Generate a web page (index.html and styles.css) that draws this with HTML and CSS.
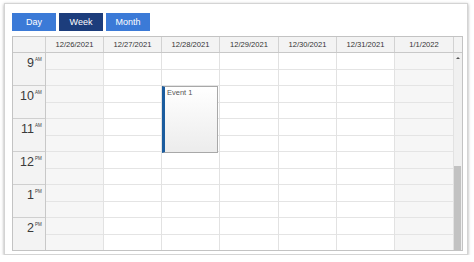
FILE: index.html
```html
<!DOCTYPE html>
<html>
<head>
<meta charset="utf-8">
<link rel="stylesheet" href="styles.css">
</head>
<body>
<div class="card">
  <div class="toolbar">
    <button class="btn">Day</button>
    <button class="btn active">Week</button>
    <button class="btn">Month</button>
  </div>
  <div class="cal">
    <div class="head">
      <div class="corner"></div>
      <div class="dh">12/26/2021</div>
      <div class="dh">12/27/2021</div>
      <div class="dh">12/28/2021</div>
      <div class="dh">12/29/2021</div>
      <div class="dh">12/30/2021</div>
      <div class="dh">12/31/2021</div>
      <div class="dh">1/1/2022</div>
      <div class="dh sb-head"></div>
    </div>
    <div class="body">
      <div class="rowhead">
        <div class="hr"><span class="n">9</span><span class="ap">AM</span></div>
        <div class="hr"><span class="n">10</span><span class="ap">AM</span></div>
        <div class="hr"><span class="n">11</span><span class="ap">AM</span></div>
        <div class="hr"><span class="n">12</span><span class="ap">PM</span></div>
        <div class="hr"><span class="n">1</span><span class="ap">PM</span></div>
        <div class="hr"><span class="n">2</span><span class="ap">PM</span></div>
      </div>
      <div class="col off"><div class="c a"></div><div class="c b"></div><div class="c a"></div><div class="c b"></div><div class="c a"></div><div class="c b"></div><div class="c a"></div><div class="c b"></div><div class="c a"></div><div class="c b"></div><div class="c a"></div><div class="c b"></div></div>
      <div class="col"><div class="c a"></div><div class="c b"></div><div class="c a"></div><div class="c b"></div><div class="c a"></div><div class="c b"></div><div class="c a"></div><div class="c b"></div><div class="c a"></div><div class="c b"></div><div class="c a"></div><div class="c b"></div></div>
      <div class="col"><div class="c a"></div><div class="c b"></div><div class="c a"></div><div class="c b"></div><div class="c a"></div><div class="c b"></div><div class="c a"></div><div class="c b"></div><div class="c a"></div><div class="c b"></div><div class="c a"></div><div class="c b"></div>
        <div class="event"><span>Event 1</span></div>
      </div>
      <div class="col"><div class="c a"></div><div class="c b"></div><div class="c a"></div><div class="c b"></div><div class="c a"></div><div class="c b"></div><div class="c a"></div><div class="c b"></div><div class="c a"></div><div class="c b"></div><div class="c a"></div><div class="c b"></div></div>
      <div class="col"><div class="c a"></div><div class="c b"></div><div class="c a"></div><div class="c b"></div><div class="c a"></div><div class="c b"></div><div class="c a"></div><div class="c b"></div><div class="c a"></div><div class="c b"></div><div class="c a"></div><div class="c b"></div></div>
      <div class="col"><div class="c a"></div><div class="c b"></div><div class="c a"></div><div class="c b"></div><div class="c a"></div><div class="c b"></div><div class="c a"></div><div class="c b"></div><div class="c a"></div><div class="c b"></div><div class="c a"></div><div class="c b"></div></div>
      <div class="col off"><div class="c a"></div><div class="c b"></div><div class="c a"></div><div class="c b"></div><div class="c a"></div><div class="c b"></div><div class="c a"></div><div class="c b"></div><div class="c a"></div><div class="c b"></div><div class="c a"></div><div class="c b"></div></div>
      <div class="scroll">
        <div class="arrow"></div>
        <div class="thumb"></div>
      </div>
    </div>
  </div>
</div>
</body>
</html>
```
FILE: styles.css
```css
* { box-sizing: border-box; }
html, body { margin: 0; padding: 0; background: #fff; }
body { font-family: "Liberation Sans", Arial, sans-serif; }

.card {
  margin: 3px 0 0 4px;
  width: 464px;
  height: 252px;
  border: 1px solid #d4d4d4;
  box-shadow: 0 1px 3px rgba(0,0,0,0.35);
  background: #fff;
  padding: 9px 0 0 7px;
}

.toolbar { display: flex; gap: 3px; height: 18px; }
.btn {
  width: 44px;
  height: 18px;
  border: 0;
  padding: 0;
  margin: 0;
  background: #3b7ad7;
  color: #fff;
  font-family: "Liberation Sans", Arial, sans-serif;
  font-size: 9px;
}
.btn.active { background: #1c3d7c; }

.cal {
  margin-top: 5px;
  width: 451px;
  height: 215px;
  border: 1px solid #c3c3c3;
  overflow: hidden;
  color: #333;
}

.head, .body {
  display: grid;
  grid-template-columns: 33px 58px 58px 58px 59px 58px 58px 59px 8px;
}
.head {
  height: 16px;
  background: #f3f3f3;
  border-bottom: 1px solid #c8c8c8;
}
.head > div { border-right: 1px solid #d2d2d2; }
.dh {
  font-size: 7.6px;
  display: flex;
  align-items: center;
  justify-content: center;
  color: #333;
}
.sb-head { border-right: 0 !important; }

.body { height: 198px; }

.rowhead { background: #f3f3f3; border-right: 1px solid #c8c8c8; }
.hr {
  height: 33px;
  border-bottom: 1px solid #cfcfcf;
  display: flex;
  justify-content: flex-end;
  align-items: flex-start;
  padding: 4px 2px 0 0;
  color: #3a3a3a;
}
.hr .n { font-size: 12.5px; line-height: 13px; }
.hr .ap { font-size: 4.5px; line-height: 6px; margin-left: 1px; width: 8px; }

.col { position: relative; border-right: 1px solid #e2e2e2; background: #fff; }
.col.off { background: #f6f6f6; }
.c { border-bottom: 1px solid #e4e4e4; }
.c.a { height: 17px; }
.c.b { height: 16px; }

.event {
  position: absolute;
  top: 33px;
  left: 0;
  width: 56px;
  height: 67px;
  border: 1px solid #a8a8a8;
  border-left: 3px solid #1b5c9e;
  background: linear-gradient(#ffffff, #ececec);
  padding: 1px 0 0 2px;
  font-size: 7.5px;
  color: #555;
}

.scroll { background: #f0f0f0; position: relative; }
.arrow {
  margin: 4px auto 0;
  width: 0; height: 0;
  border-left: 2px solid transparent;
  border-right: 2px solid transparent;
  border-bottom: 2px solid #555;
}
.thumb {
  position: absolute;
  left: 0;
  right: 1px;
  top: 113px;
  bottom: 0;
  background: #c2c2c2;
}
```
